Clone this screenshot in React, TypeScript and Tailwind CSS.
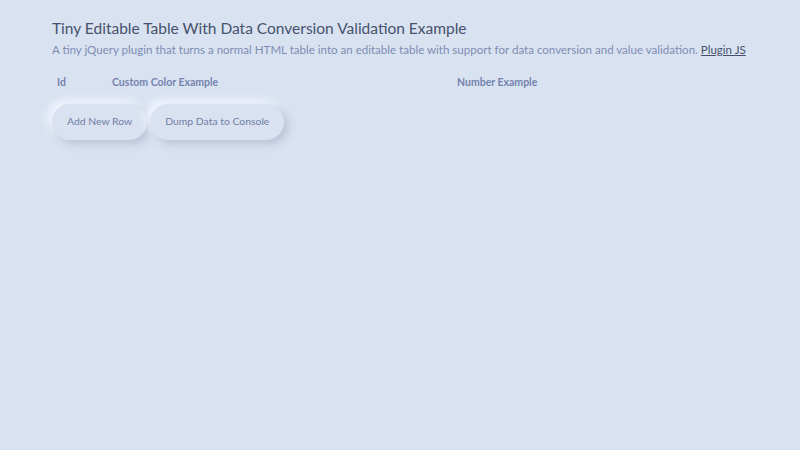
export default function App() {
  const btn =
    "h-9 rounded-full bg-[#dae2f1] px-[15px] text-[10.4px] text-[#6f7ea6] shadow-[4px_4px_8px_#b9c3d6,-4px_-4px_8px_#f4f8ff]";

  return (
    <div
      className="min-h-[450px] w-full bg-[#d9e2f1] px-[52px] pt-[18px]"
      style={{ fontFamily: "Lato, 'Noto Sans', sans-serif" }}
    >
      <h1 className="text-[15.5px] leading-[20px] text-[#46526d]">
        Tiny Editable Table With Data Conversion Validation Example
      </h1>
      <p className="mt-[4px] whitespace-nowrap text-[11.55px] leading-[16px] text-[#7e8db3]">
        A tiny jQuery plugin that turns a normal HTML table into an editable table with support for data conversion and
        value validation.{" "}
        <a href="#" className="text-[#46526d] underline">
          Plugin JS
        </a>
      </p>

      <table className="mt-[13px] w-[696px] text-left text-[10.5px] font-bold text-[#7584ae]">
        <thead>
          <tr>
            <th className="w-[60px] px-[5px] py-[4px] font-bold">Id</th>
            <th className="w-[345px] px-[0px] py-[4px] font-bold">Custom Color Example</th>
            <th className="px-0 py-[4px] font-bold">Number Example</th>
          </tr>
        </thead>
        <tbody></tbody>
      </table>

      <div className="mt-[9px] flex gap-[3px]">
        <button className={btn}>Add New Row</button>
        <button className={btn}>Dump Data to Console</button>
      </div>
    </div>
  );
}
